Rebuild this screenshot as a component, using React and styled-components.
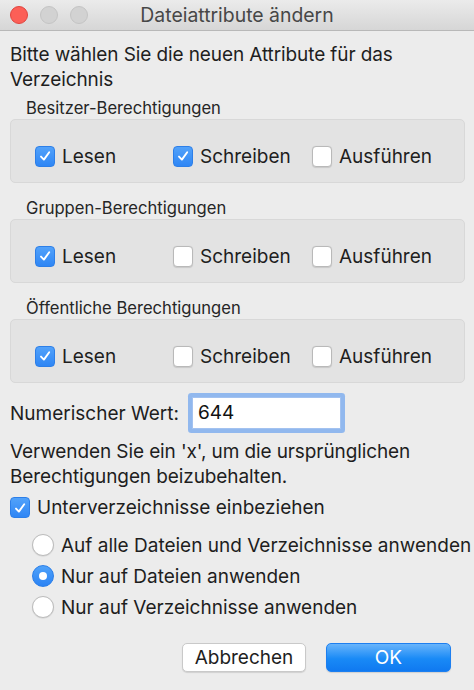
import React from 'react';
import styled, { createGlobalStyle } from 'styled-components';

const GlobalStyle = createGlobalStyle`
  html, body {
    margin: 0;
    padding: 0;
    background: #ececec;
  }
  * { box-sizing: border-box; }
`;

const Window = styled.div`
  width: 474px;
  height: 690px;
  display: flex;
  flex-direction: column;
  background: #ececec;
  font-family: 'Inter', 'Liberation Sans', sans-serif;
  color: #1e1e1e;
  overflow: hidden;
`;

const TitleBar = styled.div`
  height: 31px;
  flex-shrink: 0;
  display: grid;
  grid-template-columns: 1fr auto 1fr;
  align-items: center;
  background: linear-gradient(180deg, #ebebeb 0%, #d6d6d6 100%);
  border-bottom: 1px solid #b8b8b8;
`;

const Lights = styled.div`
  display: flex;
  align-items: center;
  gap: 12px;
  padding-left: 10px;
`;

const Light = styled.span`
  width: 18px;
  height: 18px;
  border-radius: 50%;
  background: ${(p) => (p.$red ? '#fc5f57' : '#d2d2d2')};
  border: 1px solid ${(p) => (p.$red ? '#e0443e' : '#c4c4c4')};
`;

const Title = styled.div`
  font-size: 19.4px;
  line-height: 30px;
  color: #474747;
`;

const Body = styled.div`
  flex: 1;
  display: flex;
  flex-direction: column;
  padding: 12px 9px 0 10px;
`;

const Paragraph = styled.p`
  margin: 0;
  font-size: 19px;
  line-height: 24.5px;
  letter-spacing: -0.1px;
`;

const GroupLabel = styled.div`
  font-size: 16.6px;
  line-height: 20px;
  padding-left: 16px;
  margin-top: ${(p) => p.$top}px;
  color: #262626;
`;

const GroupBox = styled.div`
  height: 64px;
  margin-top: 1px;
  border: 1px solid #d8d8d8;
  border-radius: 5px;
  background: #e3e3e3;
  display: grid;
  grid-template-columns: 138px 139px 1fr;
  align-items: center;
  padding: 10px 0 0 24px;
`;

const Option = styled.label`
  display: flex;
  align-items: center;
  gap: 7px;
  font-size: 19px;
  line-height: 21px;
  white-space: nowrap;
`;

const Box = styled.span`
  width: 20px;
  height: 21px;
  flex-shrink: 0;
  border-radius: 4px;
  display: flex;
  align-items: center;
  justify-content: center;
  background: ${(p) => (p.$checked ? 'linear-gradient(180deg, #52a2fa 0%, #2f86f5 100%)' : '#ffffff')};
  border: 1px solid ${(p) => (p.$checked ? '#2d7fe8' : '#b9b9b9')};
  box-shadow: ${(p) => (p.$checked ? 'none' : '0 0.5px 1px rgba(0,0,0,0.12)')};
`;

const Radio = styled.span`
  width: 22px;
  height: 22px;
  flex-shrink: 0;
  border-radius: 50%;
  display: flex;
  align-items: center;
  justify-content: center;
  background: ${(p) => (p.$checked ? 'linear-gradient(180deg, #4fa2fa 0%, #2b83f4 100%)' : '#ffffff')};
  border: 1px solid ${(p) => (p.$checked ? '#2a7ee8' : '#bcbcbc')};
  box-shadow: ${(p) => (p.$checked ? 'none' : '0 0.5px 1px rgba(0,0,0,0.12)')};

  &::after {
    content: '';
    display: ${(p) => (p.$checked ? 'block' : 'none')};
    width: 8px;
    height: 8px;
    border-radius: 50%;
    background: #ffffff;
  }
`;

const ValueRow = styled.div`
  display: flex;
  align-items: center;
  gap: 13px;
  margin-top: 14px;
  font-size: 19px;
`;

const ValueInput = styled.div`
  width: 149px;
  height: 32px;
  background: #ffffff;
  border: 1px solid #a3c2f0;
  box-shadow: 0 0 0 4px #91b8ee;
  border-radius: 1px;
  padding-left: 5px;
  font-size: 19px;
  line-height: 30px;
  color: #111;
`;

const Note = styled(Paragraph)`
  margin-top: 11px;
`;

const SubRow = styled(Option)`
  margin-top: 8px;
`;

const RadioList = styled.div`
  display: flex;
  flex-direction: column;
  gap: 9px;
  margin-top: 16px;
  padding-left: 22px;
`;

const Buttons = styled.div`
  display: flex;
  justify-content: flex-end;
  gap: 20px;
  margin-top: 25px;
  padding-right: 14px;
`;

const Button = styled.button`
  width: ${(p) => p.$w}px;
  height: 29px;
  border-radius: 5px;
  font-family: inherit;
  font-size: 19px;
  line-height: 27px;
  padding: 0;
  cursor: pointer;
  color: ${(p) => (p.$primary ? '#ffffff' : '#1e1e1e')};
  background: ${(p) =>
    p.$primary ? 'linear-gradient(180deg, #68b4fb 0%, #198af6 55%, #1079f0 100%)' : '#ffffff'};
  border: 1px solid ${(p) => (p.$primary ? '#1d7ff0' : '#c9c9c9')};
  box-shadow: 0 1px 1px rgba(0, 0, 0, 0.12);
`;

const Check = () => (
  <svg width="14" height="14" viewBox="0 0 14 14">
    <path d="M3 7.6 L5.9 10.6 L11.2 3.2" fill="none" stroke="#ffffff" strokeWidth="1.9" strokeLinecap="round" strokeLinejoin="round" />
  </svg>
);

const CheckOption = ({ checked, children }) => (
  <Option>
    <Box $checked={checked}>{checked && <Check />}</Box>
    {children}
  </Option>
);

const groups = [
  { title: 'Besitzer-Berechtigungen', values: [true, true, false] },
  { title: 'Gruppen-Berechtigungen', values: [true, false, false] },
  { title: 'Öffentliche Berechtigungen', values: [true, false, false] },
];

const perms = ['Lesen', 'Schreiben', 'Ausführen'];

const radios = [
  { label: 'Auf alle Dateien und Verzeichnisse anwenden', checked: false },
  { label: 'Nur auf Dateien anwenden', checked: true },
  { label: 'Nur auf Verzeichnisse anwenden', checked: false },
];

export default function App() {
  return (
    <Window>
      <GlobalStyle />
      <TitleBar>
        <Lights>
          <Light $red />
          <Light />
          <Light />
        </Lights>
        <Title>Dateiattribute ändern</Title>
        <div />
      </TitleBar>
      <Body>
        <Paragraph>Bitte wählen Sie die neuen Attribute für das Verzeichnis</Paragraph>
        {groups.map((g, i) => (
          <React.Fragment key={g.title}>
            <GroupLabel $top={i === 0 ? 6 : 15}>{g.title}</GroupLabel>
            <GroupBox>
              {perms.map((p, j) => (
                <CheckOption key={p} checked={g.values[j]}>{p}</CheckOption>
              ))}
            </GroupBox>
          </React.Fragment>
        ))}
        <ValueRow>
          Numerischer Wert:
          <ValueInput>644</ValueInput>
        </ValueRow>
        <Note>Verwenden Sie ein 'x', um die ursprünglichen Berechtigungen beizubehalten.</Note>
        <SubRow>
          <Box $checked><Check /></Box>
          Unterverzeichnisse einbeziehen
        </SubRow>
        <RadioList>
          {radios.map((r) => (
            <Option key={r.label}>
              <Radio $checked={r.checked} />
              {r.label}
            </Option>
          ))}
        </RadioList>
        <Buttons>
          <Button $w={124}>Abbrechen</Button>
          <Button $w={125} $primary>OK</Button>
        </Buttons>
      </Body>
    </Window>
  );
}
